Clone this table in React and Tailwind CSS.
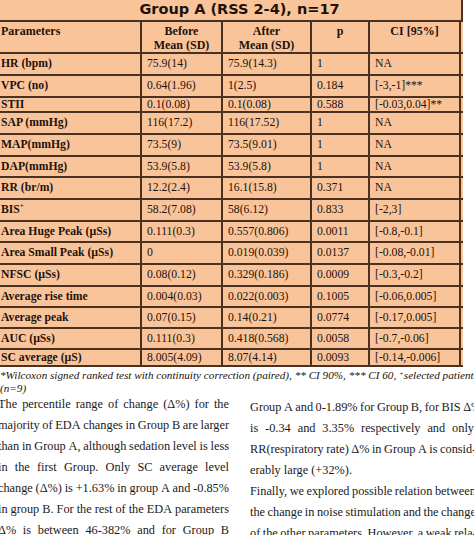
const ROWS = [
  { name: 'HR (bpm)', before: '75.9(14)', after: '75.9(14.3)', p: '1', ci: 'NA', h: 'h-[22px]' },
  { name: 'VPC (no)', before: '0.64(1.96)', after: '1(2.5)', p: '0.184', ci: '[-3,-1]***', h: 'h-[22px]' },
  { name: 'STII', before: '0.1(0.08)', after: '0.1(0.08)', p: '0.588', ci: '[-0.03,0.04]**', h: 'h-[15px]' },
  { name: 'SAP (mmHg)', before: '116(17.2)', after: '116(17.52)', p: '1', ci: 'NA', h: 'h-[22px]' },
  { name: 'MAP(mmHg)', before: '73.5(9)', after: '73.5(9.01)', p: '1', ci: 'NA', h: 'h-[22px]' },
  { name: 'DAP(mmHg)', before: '53.9(5.8)', after: '53.9(5.8)', p: '1', ci: 'NA', h: 'h-[21px]' },
  { name: 'RR (br/m)', before: '12.2(2.4)', after: '16.1(15.8)', p: '0.371', ci: 'NA', h: 'h-[22px]' },
  { name: 'BIS', sup: '+', before: '58.2(7.08)', after: '58(6.12)', p: '0.833', ci: '[-2,3]', h: 'h-[22px]' },
  { name: 'Area Huge Peak (µSs)', before: '0.111(0.3)', after: '0.557(0.806)', p: '0.0011', ci: '[-0.8,-0.1]', h: 'h-[21px]' },
  { name: 'Area Small Peak (µSs)', before: '0', after: '0.019(0.039)', p: '0.0137', ci: '[-0.08,-0.01]', h: 'h-[22px]' },
  { name: 'NFSC (µSs)', before: '0.08(0.12)', after: '0.329(0.186)', p: '0.0009', ci: '[-0.3,-0.2]', h: 'h-[22px]' },
  { name: 'Average rise time', before: '0.004(0.03)', after: '0.022(0.003)', p: '0.1005', ci: '[-0.06,0.005]', h: 'h-[21px]' },
  { name: 'Average peak', before: '0.07(0.15)', after: '0.14(0.21)', p: '0.0774', ci: '[-0.17,0.005]', h: 'h-[21px]' },
  { name: 'AUC (µSs)', before: '0.111(0.3)', after: '0.418(0.568)', p: '0.0058', ci: '[-0.7,-0.06]', h: 'h-[21px]' },
  { name: 'SC average (µS)', before: '8.005(4.09)', after: '8.07(4.14)', p: '0.0093', ci: '[-0.14,-0.006]', h: 'h-[17px]' },
];

const LEFT = [
  'The percentile range of change (Δ%) for the',
  'majority of EDA changes in Group B are larger',
  'than in Group A, although sedation level is less',
  'in the first Group. Only SC average level',
  'change (Δ%) is +1.63% in group A and -0.85%',
  'in group B. For the rest of the EDA parameters',
  'Δ% is between 46-382% and for Group B',
];

const RIGHT = [
  { t: 'Group A and 0-1.89% for Group B, for BIS Δ%', j: true },
  { t: 'is -0.34 and 3.35% respectively and only', j: true },
  { t: 'RR(respiratory rate) Δ% in Group A is consid-', j: true },
  { t: 'erably large (+32%).', j: false },
  { t: 'Finally, we explored possible relation between', j: true },
  { t: 'the change in noise stimulation and the change', j: true },
  { t: 'of the other parameters. However, a weak rela-', j: true },
];

const GRID = 'grid grid-cols-[142px_81px_89px_58px_91px] w-[463px] border-b-2 border-[#4a3222]';
const CELL = 'border-r-2 border-[#4a3222] flex items-center pl-[5px] whitespace-nowrap';

function Line({ text, justify = true }) {
  if (!justify) return <div className="whitespace-nowrap">{text}</div>;
  const words = text.split(' ');
  return (
    <div className="flex justify-between gap-[2.5px] whitespace-nowrap">
      {words.map((w, i) => (
        <span key={i}>{w}</span>
      ))}
    </div>
  );
}

export default function App() {
  return (
    <div className="w-[474px] h-[535px] overflow-hidden bg-white text-[#1e120a] font-['Liberation_Serif',serif]">
      <div className="bg-[#fac49b] w-[463px]">
        <div className="h-[22px] border-b-2 border-r-2 border-[#4a3222] flex items-center justify-center pl-[18px] font-['DejaVu_Sans',sans-serif] font-bold text-[14.5px]">
          Group A (RSS 2-4), n=17
        </div>
        <div className={`${GRID} h-[32px] font-bold text-[12px] leading-[14px]`}>
          <div className="border-r-2 border-[#4a3222] pl-[1px] pt-[2px]">Parameters</div>
          <div className="border-r-2 border-[#4a3222] text-center pt-[2px]">Before<br />Mean (SD)</div>
          <div className="border-r-2 border-[#4a3222] text-center pt-[2px]">After<br />Mean (SD)</div>
          <div className="border-r-2 border-[#4a3222] text-center pt-[2px]">p</div>
          <div className="border-r-2 border-[#4a3222] text-center pt-[2px]">CI [95%]</div>
        </div>
        {ROWS.map((r) => (
          <div key={r.name} className={`${GRID} ${r.h} text-[11.7px] leading-none`}>
            <div className="border-r-2 border-[#4a3222] flex items-center pl-[1px] font-bold whitespace-nowrap">
              {r.name}
              {r.sup && <sup className="text-[7px] -top-[4px]">{r.sup}</sup>}
            </div>
            <div className={CELL}>{r.before}</div>
            <div className={CELL}>{r.after}</div>
            <div className={CELL}>{r.p}</div>
            <div className={CELL}>{r.ci}</div>
          </div>
        ))}
      </div>
      <div className="italic text-[11.2px] leading-[13px] mt-[2px] whitespace-nowrap">
        <div>*Wilcoxon signed ranked test with continuity correction (paired), ** CI 90%, *** CI 60, <sup className="text-[7px]">+</sup>selected patients</div>
        <div>(n=9)</div>
      </div>
      <div className="flex mt-[-1px] text-[12.3px] leading-[21px] text-[#1a1a1a]">
        <div className="w-[231px] ml-[-2px] shrink-0">
          {LEFT.map((l, i) => (
            <Line key={i} text={l} />
          ))}
        </div>
        <div className="w-[224px] ml-[21px] shrink-0 pt-[3px]">
          {RIGHT.map((l, i) => (
            <Line key={i} text={l.t} justify={l.j} />
          ))}
        </div>
      </div>
    </div>
  );
}
